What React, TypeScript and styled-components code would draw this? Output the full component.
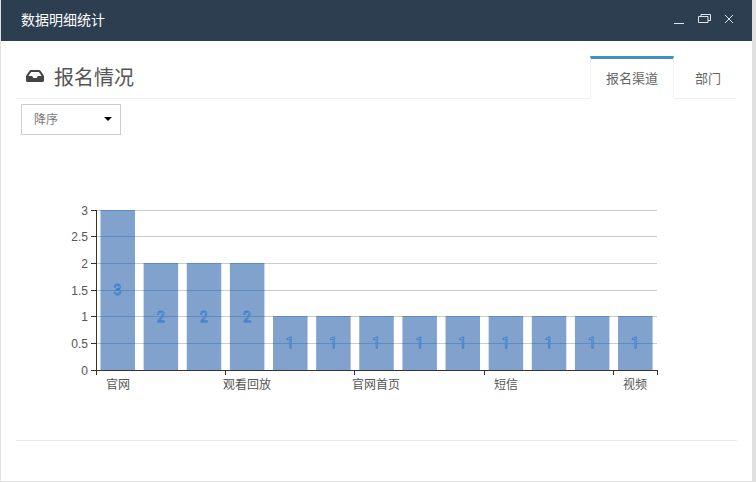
import React from 'react';
import styled, { createGlobalStyle } from 'styled-components';
import { FaInbox } from 'react-icons/fa';

const GlobalStyle = createGlobalStyle`
  html, body {
    margin: 0;
    padding: 0;
    background: #fff;
  }
  body {
    font-family: "Liberation Sans", "Noto Sans CJK SC", sans-serif;
  }
`
const Page = styled.div`
  width: 756px;
  height: 482px;
  overflow: hidden;
  box-sizing: border-box;
  background: #e0e0e0;
  padding: 0 4px 0 1px;
`
const Dialog = styled.div`
  height: 481px;
  background: #fff;
  display: flex;
  flex-direction: column;
`
const Header = styled.header`
  height: 41px;
  flex: none;
  background: #2c3e50;
  color: #fff;
  display: flex;
  align-items: center;
  justify-content: space-between;
  padding: 0 18px 0 20px;
  font-size: 14px;
`
const HeaderTitle = styled.span`
  margin-bottom: 3px;
`
const WindowButtons = styled.div`
  display: flex;
  align-items: center;
  gap: 13px;
  margin-bottom: 4px;
  color: #dfe4ea;
`
const Card = styled.section`
  margin: 15px 15px 0 15px;
  height: 385px;
  box-sizing: border-box;
  border-bottom: 1px solid #e7ecf1;
`
const CardHead = styled.div`
  height: 42px;
  display: flex;
  justify-content: space-between;
  border-bottom: 1px solid #eef1f5;
`
const CardTitle = styled.div`
  display: flex;
  align-items: center;
  gap: 10px;
  padding: 0 0 2px 10px;
  font-size: 20px;
  color: #555;
  svg {
    color: #444;
    font-size: 18px;
  }
`
const Tabs = styled.div`
  display: flex;
  margin-bottom: -1px;
`
const Tab = styled.div<{ $active?: boolean }>`
  box-sizing: border-box;
  width: ${p => (p.$active ? '84px' : '63px')};
  display: flex;
  align-items: center;
  padding: 0 0 3px ${p => (p.$active ? '15px' : '20px')};
  font-size: 13px;
  color: #666;
  background: #fff;
  border-top: 3px solid ${p => (p.$active ? '#3d94c4' : 'transparent')};
  border-left: 1px solid ${p => (p.$active ? '#eef1f5' : 'transparent')};
  border-right: 1px solid ${p => (p.$active ? '#eef1f5' : 'transparent')};
  border-bottom: 1px solid ${p => (p.$active ? '#fff' : '#eef1f5')};
`
const Sort = styled.div`
  box-sizing: border-box;
  width: 100px;
  height: 31px;
  margin: 5px 0 0 5px;
  padding: 0 8px 2px 12px;
  border: 1px solid #c9ced8;
  display: flex;
  align-items: center;
  justify-content: space-between;
  font-size: 12px;
  color: #777;
`
const Caret = styled.span`
  width: 0;
  height: 0;
  border-left: 4px solid transparent;
  border-right: 4px solid transparent;
  border-top: 4px solid #000;
`
const ChartBox = styled.div`
  margin: 60px 0 0 -16px;
  line-height: 0;
`

const data = [3, 2, 2, 2, 1, 1, 1, 1, 1, 1, 1, 1, 1]
const yTicks = [0, 0.5, 1, 1.5, 2, 2.5, 3]
const xLabels = [
  { name: '官网', x: 118 },
  { name: '观看回放', x: 247 },
  { name: '官网首页', x: 376 },
  { name: '短信', x: 506 },
  { name: '视频', x: 635 },
]
const xTicks = [96.5, 225.5, 354.5, 484.5, 613.5, 657.5]

const base = 370
const top = 210
const yOf = (v: number) => Math.floor(base - (v / 3) * (base - top)) + 0.5

function Chart() {
  return (
    <svg width="756" height="210" viewBox="0 195 756 210" fontFamily='"Liberation Sans", "Noto Sans CJK SC", sans-serif'>
      {yTicks.map(t => (
        <g key={t}>
          <line x1="97" x2="657" y1={yOf(t)} y2={yOf(t)} stroke="#cccccc" />
          <line x1="91" x2="97" y1={yOf(t)} y2={yOf(t)} stroke="#333" />
          <text x="88" y={yOf(t) + 4} textAnchor="end" fontSize="12" fill="#555">{t}</text>
        </g>
      ))}
      {data.map((value, i) => {
        const x = 100.5 + i * 43.13
        const y = yOf(value)
        return (
          <g key={i}>
            <rect x={x} y={y} width="34.5" height={base - y} fill="#80a2cd" />
            {yTicks.filter(t => t > 0 && t <= value).map(t => (
              <line key={t} x1={x} x2={x + 34.5} y1={yOf(t)} y2={yOf(t)} stroke="#5b8dc2" />
            ))}
            <text
              x={x + 17}
              y={(y + base) / 2 + 5}
              textAnchor="middle"
              fontFamily="Roboto, sans-serif"
              fontSize="14"
              fill="#a8c4e6"
              stroke="#3478c8"
              strokeWidth="0.8"
            >
              {value}
            </text>
          </g>
        )
      })}
      <line x1="96.5" x2="96.5" y1="210" y2="370" stroke="#333" />
      <line x1="96" x2="658" y1="370.5" y2="370.5" stroke="#333" />
      {xTicks.map(x => (
        <line key={x} x1={x} x2={x} y1="370" y2="375" stroke="#333" />
      ))}
      {xLabels.map(l => (
        <text key={l.name} x={l.x} y="389" textAnchor="middle" fontSize="12" fill="#555">{l.name}</text>
      ))}
    </svg>
  )
}

function App() {
  return (
    <Page>
      <GlobalStyle />
      <Dialog>
        <Header>
          <HeaderTitle>数据明细统计</HeaderTitle>
          <WindowButtons>
            <svg width="12" height="12" viewBox="0 0 12 12" fill="none" stroke="currentColor">
              <path d="M1 10.500h10" />
            </svg>
            <svg width="13" height="12" viewBox="0 0 13 12" fill="none" stroke="currentColor">
              <path d="M.5 3.500h9.500v6h-9.500zM3 3.500v-2h9.500v6h-2.500" />
            </svg>
            <svg width="10" height="10" viewBox="0 0 10 10" fill="none" stroke="currentColor">
              <path d="M1 1l8 8M9 1l-8 8" />
            </svg>
          </WindowButtons>
        </Header>
        <Card>
          <CardHead>
            <CardTitle>
              <FaInbox />
              <span>报名情况</span>
            </CardTitle>
            <Tabs>
              <Tab $active>报名渠道</Tab>
              <Tab>部门</Tab>
            </Tabs>
          </CardHead>
          <Sort>
            <span>降序</span>
            <Caret />
          </Sort>
          <ChartBox>
            <Chart />
          </ChartBox>
        </Card>
      </Dialog>
    </Page>
  )
}

export default App
